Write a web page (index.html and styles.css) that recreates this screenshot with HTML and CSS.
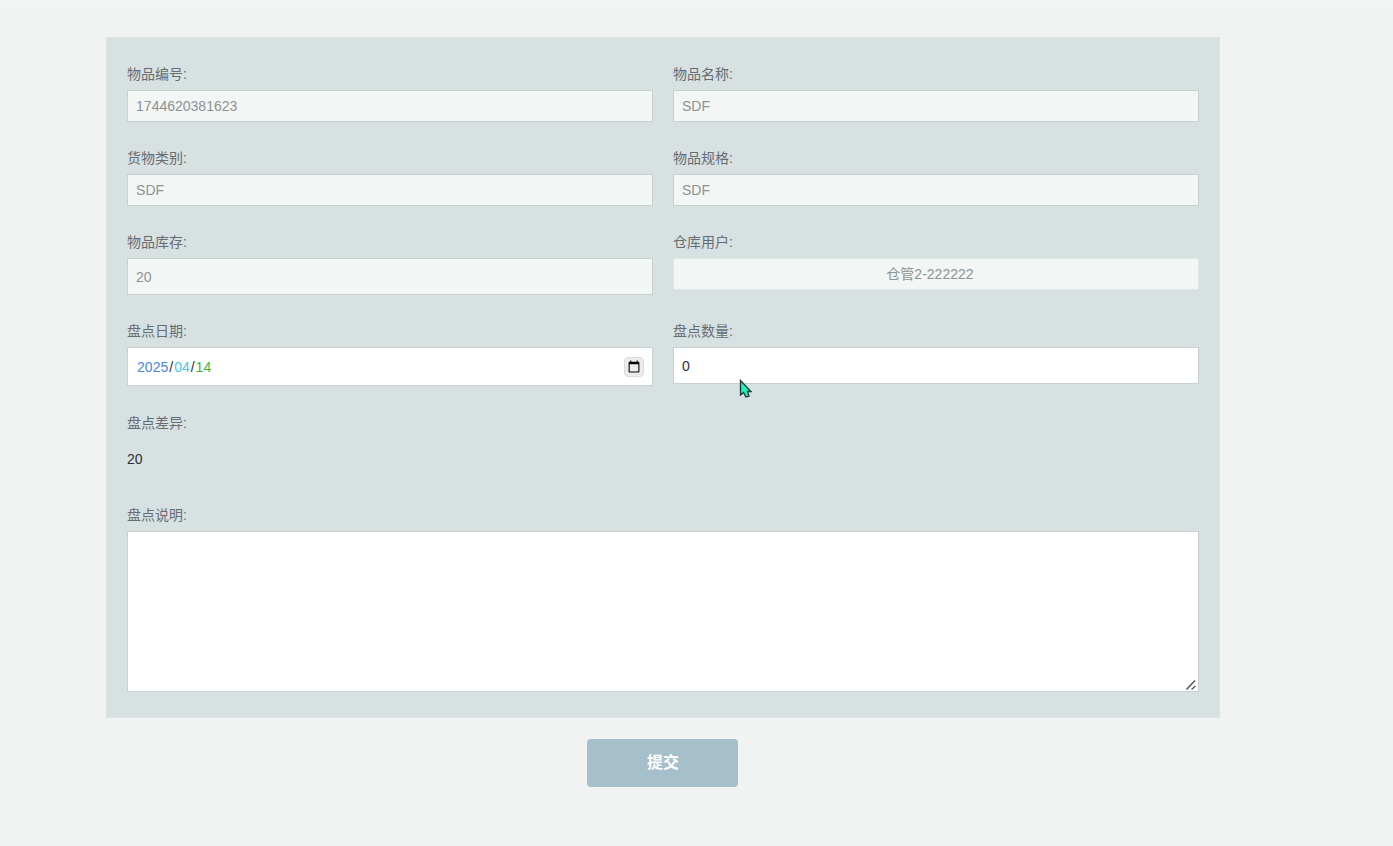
FILE: index.html
```html
<!DOCTYPE html>
<html lang="zh-CN">
<head>
<meta charset="utf-8">
<title>物品盘点</title>
<meta name="viewport" content="width=device-width, initial-scale=1">
<link rel="stylesheet" href="styles.css">
</head>
<body>
<main class="page">
  <form class="form">
    <div class="panel">
      <div class="field">
        <label class="label" for="code">物品编号:</label>
        <input class="control" id="code" type="text" value="1744620381623" disabled>
      </div>
      <div class="field">
        <label class="label" for="name">物品名称:</label>
        <input class="control" id="name" type="text" value="SDF" disabled>
      </div>
      <div class="field">
        <label class="label" for="category">货物类别:</label>
        <input class="control" id="category" type="text" value="SDF" disabled>
      </div>
      <div class="field">
        <label class="label" for="spec">物品规格:</label>
        <input class="control" id="spec" type="text" value="SDF" disabled>
      </div>
      <div class="field">
        <label class="label" for="stock">物品库存:</label>
        <input class="control control-tall" id="stock" type="text" value="20" disabled>
      </div>
      <div class="field">
        <label class="label" for="keeper">仓库用户:</label>
        <select class="control control-select" id="keeper" disabled>
          <option>仓管2-222222</option>
        </select>
      </div>
      <div class="field">
        <label class="label" for="date">盘点日期:</label>
        <div class="date">
          <input class="control control-date" id="date" type="date" value="2025-04-14">
          <span class="date-text" aria-hidden="true"><span class="year">2025</span><span>/</span><span class="month">04</span><span>/</span><span class="day">14</span></span>
        </div>
      </div>
      <div class="field">
        <label class="label" for="count">盘点数量:</label>
        <div class="count">
          <input class="control control-tall" id="count" type="text" inputmode="numeric" value="0">
          <svg class="pointer" viewBox="0 0 14 20" aria-hidden="true">
            <path d="M1.500 1.500V16L4.500 13.500L7 18L10 17L8.500 12.500H12Z" fill="#1ff0b8" stroke="#1c3335" stroke-width="1.300"/>
          </svg>
        </div>
      </div>
      <div class="field field-wide">
        <label class="label" for="diff">盘点差异:</label>
        <output class="value" id="diff">20</output>
      </div>
      <div class="field field-wide">
        <label class="label" for="note">盘点说明:</label>
        <div class="note">
          <textarea class="control control-note" id="note"></textarea>
          <svg class="grip" viewBox="0 0 12 12" aria-hidden="true">
            <path d="M1.500 10.500L10 1.500M6.500 10.500L10.500 7" fill="none" stroke="#5c5c5c" stroke-width="1.600"/>
          </svg>
        </div>
      </div>
    </div>
    <button class="submit" type="button">提交</button>
  </form>
</main>
</body>
</html>
```
FILE: styles.css
```css
* {
  box-sizing: border-box;
}

body {
  margin: 0;
  background: #f1f3f3;
  color: #2b3135;
  font: 14px/20px "Liberation Sans", Arial, "Noto Sans CJK SC", sans-serif;
}

.page {
  padding: 29px 67px 40px 0;
  border-top: 8px solid #f3f4f4;
}

.form {
  display: flex;
  flex-direction: column;
  align-items: center;
  gap: 21px;
  width: 84%;
  margin: 0 auto;
}

.panel {
  display: grid;
  grid-template-columns: 1fr 1fr;
  gap: 26px 20px;
  align-items: start;
  width: 100%;
  padding: 26px 20px 25px;
  border: 1px solid #dde5e5;
  background: #d8e1e1;
}

.field {
  display: flex;
  flex-direction: column;
  gap: 6px;
  min-width: 0;
}

.field-wide {
  grid-column: 1 / -1;
}

.label {
  color: #666c72;
}

.control {
  display: block;
  width: 100%;
  height: 32px;
  margin: 0;
  padding: 0 8px;
  border: 1px solid #c9d0d0;
  border-radius: 0;
  outline: 0;
  background: #fff;
  color: #2b3135;
  font: inherit;
}

.control:disabled {
  background: #f2f6f5;
  color: #8e9292;
  opacity: 1;
}

.control-tall {
  height: 37px;
}

.control-select {
  appearance: none;
  padding: 0 20px 0 8px;
  border-color: #dfe6e6;
  text-align: center;
  text-align-last: center;
}

.date {
  position: relative;
  height: 40px;
}

.control-date {
  height: 39px;
  color: transparent;
}

.control-date::-webkit-calendar-picker-indicator {
  width: 14px;
  height: 14px;
  padding: 2px;
  border: 1px solid #dcdcdc;
  border-radius: 4px;
  background-color: #ececec;
}

.date-text {
  position: absolute;
  top: 10px;
  left: 10px;
  display: flex;
  gap: 1px;
  color: #2b3135;
  pointer-events: none;
}

.year {
  color: #4a86e0;
}

.month {
  color: #45c8ea;
}

.day {
  color: #3db53d;
}

.count {
  position: relative;
}

.pointer {
  position: absolute;
  top: 32px;
  left: 66px;
  width: 14px;
  height: 20px;
}

.value {
  display: flex;
  align-items: center;
  height: 40px;
}

.note {
  position: relative;
}

.control-note {
  height: 161px;
  padding: 8px;
  resize: none;
}

.grip {
  position: absolute;
  right: 2px;
  bottom: 1px;
  width: 12px;
  height: 12px;
  pointer-events: none;
}

.submit {
  width: 151px;
  height: 48px;
  padding: 0;
  border: 0;
  border-radius: 4px;
  background: #a5c0ca;
  color: #fff;
  font: bold 16px/24px "Liberation Sans", Arial, "Noto Sans CJK SC", sans-serif;
}
```
